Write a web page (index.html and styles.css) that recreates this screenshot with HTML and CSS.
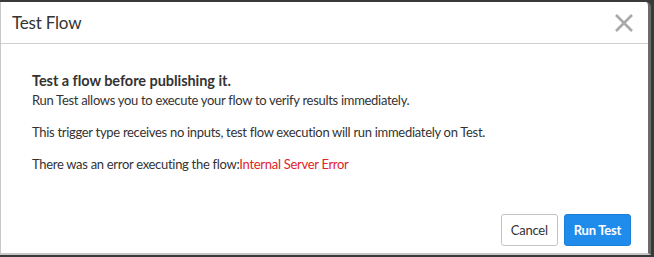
FILE: index.html
```html
<!DOCTYPE html>
<html>
<head>
<meta charset="utf-8">
<link rel="stylesheet" href="styles.css">
</head>
<body>
<div class="backdrop">
  <div class="modal">
    <div class="modal-header">
      <h1 class="modal-title">Test Flow</h1>
      <button class="close" aria-label="Close">
        <svg width="20" height="20" viewBox="0 0 20 20"><path d="M2 2 L18 18 M18 2 L2 18" stroke="#a9a9a9" stroke-width="2.6" stroke-linecap="butt"/></svg>
      </button>
    </div>
    <div class="modal-body">
      <p class="lead">Test a flow before publishing it.</p>
      <p class="line">Run Test allows you to execute your flow to verify results immediately.</p>
      <p class="line gap">This trigger type receives no inputs, test flow execution will run immediately on Test.</p>
      <p class="line gap">There was an error executing the flow:<span class="error">Internal Server Error</span></p>
    </div>
    <div class="modal-footer">
      <button class="btn btn-default">Cancel</button>
      <button class="btn btn-primary">Run Test</button>
    </div>
  </div>
</div>
</body>
</html>
```
FILE: styles.css
```css
html, body {
  margin: 0;
  padding: 0;
  width: 654px;
  height: 257px;
  overflow: hidden;
  background: #555;
}
.backdrop {
  width: 654px;
  height: 257px;
  background: #3a3a3a;
  padding-top: 2px;
  box-sizing: border-box;
}
.modal {
  width: 651px;
  height: 253px;
  background: #fff;
  border-left: 1px solid #c8c8c8;
  border-bottom: 2px solid #c8c8c8;
  border-right: 3px solid #6b6b6b;
  border-top-right-radius: 5px;
  box-sizing: border-box;
  display: flex;
  flex-direction: column;
  font-family: Lato, "Liberation Sans", sans-serif;
  color: #333;
}
.modal-header {
  height: 41px;
  border-bottom: 1px solid #d0d0d0;
  display: flex;
  align-items: center;
  justify-content: space-between;
  padding: 0 14px 0 11px;
}
.modal-title {
  margin: 0;
  font-size: 17px;
  font-weight: 400;
  letter-spacing: -0.2px;
  color: #333;
}
.close {
  border: 0;
  background: none;
  padding: 0;
  width: 20px;
  height: 20px;
  display: flex;
}
.modal-body {
  padding: 27px 31px 0;
  flex: 1;
}
.modal-body p {
  margin: 0;
}
.lead {
  font-size: 14.5px;
  font-weight: 700;
  line-height: 20px;
  letter-spacing: -0.05px;
}
.line {
  font-size: 13px;
  line-height: 18px;
  letter-spacing: -0.3px;
}
.line.gap {
  margin-top: 14px;
}
.error {
  color: #e0242b;
}
.modal-footer {
  display: flex;
  justify-content: flex-end;
  gap: 6px;
  padding: 0 17px 7px 0;
}
.btn {
  height: 32px;
  padding: 0 9px;
  border-radius: 3px;
  font-family: Lato, "Liberation Sans", sans-serif;
  font-size: 13px;
  letter-spacing: -0.25px;
  cursor: pointer;
}
.btn-default {
  background: #fff;
  border: 1px solid #c4c4c4;
  color: #333;
}
.btn-primary {
  background: #1f8ceb;
  border: 1px solid #1a7fd8;
  color: #fff;
  font-weight: 700;
}
```
